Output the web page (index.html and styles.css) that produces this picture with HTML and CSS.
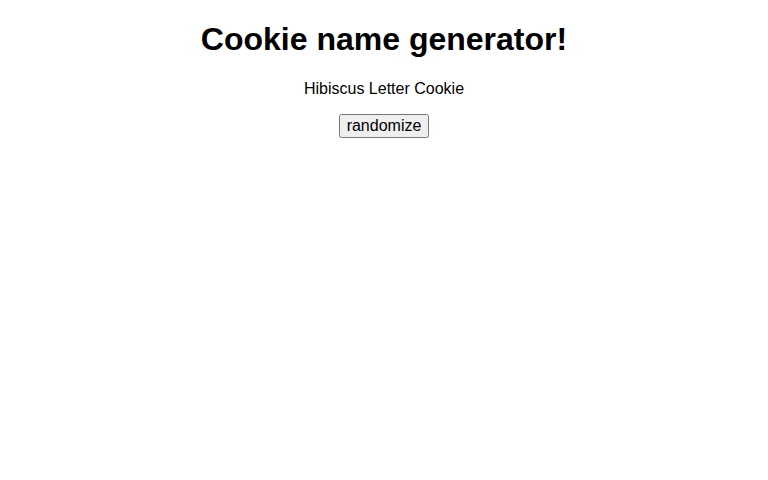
FILE: index.html
```html
<!DOCTYPE html>
<html lang="en">
<head>
<meta charset="UTF-8">
<title>Cookie name generator</title>
<link rel="stylesheet" href="styles.css">
</head>
<body>
<div class="app">
	<h1 class="title">Cookie name generator!</h1>
	<p class="name">Hibiscus Letter Cookie</p>
	<button class="randomize">randomize</button>
</div>
</body>
</html>
```

FILE: styles.css
```css
body {
	margin: 0;
	font-family: "Liberation Sans", Arial, sans-serif;
	color: #000;
	background: #fff;
}
.app {
	text-align: center;
}
.title {
	font-size: 2em;
	margin: 0.67em 0;
}
.name {
	margin: 1em 0;
}
.randomize {
	font-family: inherit;
	font-size: 16px;
}
```
